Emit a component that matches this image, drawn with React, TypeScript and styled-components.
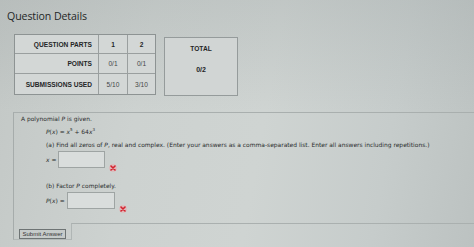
import React from "react";
import styled, { createGlobalStyle } from "styled-components";

const Global = createGlobalStyle`
  html, body { margin: 0; padding: 0; }
  body {
    width: 474px; height: 247px; overflow: hidden;
    background: linear-gradient(100deg, #c3c8c6 0%, #cdd2d0 30%, #cfd4d2 55%, #c6cccb 80%, #bcc2c1 100%);
    font-family: "DejaVu Sans", Verdana, sans-serif;
    color: #333;
  }
`;

const Page = styled.div`
  display: flex;
  flex-direction: column;
  height: 247px;
  background: linear-gradient(180deg, rgba(150,158,158,0.25) 0%, rgba(255,255,255,0) 45%);
`;

const Title = styled.h1`
  margin: 8px 0 0 7px;
  font-family: "Open Sans", "Liberation Sans", sans-serif;
  font-weight: 500;
  font-size: 10.6px;
  line-height: 16px;
  letter-spacing: -0.1px;
  color: #242727;
`;

const Summary = styled.div`
  display: flex;
  align-items: flex-start;
  gap: 8px;
  margin: 10px 0 0 14px;
`;

const Table = styled.div`
  display: grid;
  grid-template-columns: 84px 29px 27px;
  grid-template-rows: 19px 20px 20px;
  border: 1px solid #8d9393;
  background: #d3d7d6;
`;

const Cell = styled.div<{ $label?: boolean; $bold?: boolean }>`
  display: flex;
  align-items: center;
  justify-content: ${(p) => (p.$label ? "flex-end" : "center")};
  padding-right: ${(p) => (p.$label ? "6px" : "0")};
  border-right: 1px solid #9a9f9f;
  border-bottom: 1px solid #9a9f9f;
  font-family: "Liberation Sans", Arial, sans-serif;
  font-size: 6.6px;
  font-weight: ${(p) => (p.$bold ? 700 : 400)};
  color: ${(p) => (p.$bold ? "#242626" : "#444848")};
  &:nth-child(3n) { border-right: none; }
  &:nth-last-child(-n + 3) { border-bottom: none; }
`;

const TotalBox = styled.div`
  width: 72px;
  height: 57px;
  margin-top: 3px;
  border: 1px solid #959b9b;
  background: #d1d5d4;
  display: flex;
  flex-direction: column;
  align-items: center;
  font-family: "Liberation Sans", Arial, sans-serif;
  font-weight: 700;
  font-size: 6.6px;
  color: #242626;
`;

const TotalLabel = styled.div`
  margin-top: 7px;
`;

const TotalValue = styled.div`
  margin-top: 14px;
  font-size: 7px;
`;

const Panel = styled.div`
  margin: 16px 0 0 13px;
  border-left: 1px solid #a6acab;
  border-top: 1px solid #a9afae;
  padding: 2px 0 0 7px;
  height: 108px;
  font-size: 5.95px;
  color: #2a2d2d;
`;

const Line = styled.div<{ $indent?: number; $mt?: number }>`
  margin-left: ${(p) => p.$indent ?? 0}px;
  margin-top: ${(p) => p.$mt ?? 0}px;
  line-height: 8px;
  white-space: nowrap;
`;

const AnswerRow = styled.div<{ $mt: number }>`
  display: flex;
  align-items: flex-start;
  margin: ${(p) => p.$mt}px 0 0 25px;
`;

const Label = styled.span`
  margin-right: 2px;
  line-height: 17px;
`;

const Input = styled.div<{ $w: number }>`
  width: ${(p) => p.$w}px;
  height: 15px;
  border: 1px solid #9ea4a3;
  background: #d9dddc;
`;

const Wrong = styled.svg`
  width: 8px;
  height: 8px;
  margin: 13px 0 0 4px;
`;

const Footer = styled.div`
  display: flex;
  margin-left: 13px;
  height: 17px;
`;

const ButtonCell = styled.div`
  width: 58px;
  border-left: 1px solid #a6acab;
  border-bottom: 1px solid #b2b8b7;
  padding: 6px 0 0 5px;
  box-sizing: border-box;
`;

const Filler = styled.div`
  flex: 1;
  border-left: 1px solid #b0b6b5;
  border-top: 1px solid #aab0af;
`;

const SubmitButton = styled.button`
  display: block;
  width: 47px;
  height: 10px;
  padding: 0;
  border: 1px solid #6e7474;
  background: #c6cbca;
  font-family: "Liberation Sans", Arial, sans-serif;
  font-size: 6px;
  line-height: 8px;
  color: #333;
`;

const Sup = styled.sup`
  font-size: 4px;
  vertical-align: 3px;
  line-height: 0;
`;

const XMark = () => (
  <Wrong viewBox="0 0 8 8">
    <circle cx="4" cy="4" r="3.8" fill="#e9a9ad" opacity="0.7" />
    <path d="M2 2 L6 6 M6 2 L2 6" stroke="#d2232f" strokeWidth="1.6" strokeLinecap="round" />
  </Wrong>
);

export default function App() {
  return (
    <>
      <Global />
      <Page>
        <Title>Question Details</Title>
        <Summary>
          <Table>
            <Cell $label $bold>QUESTION PARTS</Cell>
            <Cell $bold>1</Cell>
            <Cell $bold>2</Cell>
            <Cell $label $bold>POINTS</Cell>
            <Cell>0/1</Cell>
            <Cell>0/1</Cell>
            <Cell $label $bold>SUBMISSIONS USED</Cell>
            <Cell>5/10</Cell>
            <Cell>3/10</Cell>
          </Table>
          <TotalBox>
            <TotalLabel>TOTAL</TotalLabel>
            <TotalValue>0/2</TotalValue>
          </TotalBox>
        </Summary>
        <Panel>
          <Line>A polynomial <i>P</i> is given.</Line>
          <Line $indent={25} $mt={5}>
            <i>P</i>(<i>x</i>) = <i>x</i><Sup>5</Sup> + 64<i>x</i><Sup>3</Sup>
          </Line>
          <Line $indent={25} $mt={5}>
            (a) Find all zeros of <i>P</i>, real and complex. (Enter your answers as a comma-separated list. Enter all answers including repetitions.)
          </Line>
          <AnswerRow $mt={2}>
            <Label><i>x</i> =</Label>
            <Input $w={45} />
            <XMark />
          </AnswerRow>
          <Line $indent={25} $mt={10}>
            (b) Factor <i>P</i> completely.
          </Line>
          <AnswerRow $mt={2}>
            <Label><i>P</i>(<i>x</i>) =</Label>
            <Input $w={46} />
            <XMark />
          </AnswerRow>
        </Panel>
        <Footer>
          <ButtonCell>
            <SubmitButton>Submit Answer</SubmitButton>
          </ButtonCell>
          <Filler />
        </Footer>
      </Page>
    </>
  );
}
